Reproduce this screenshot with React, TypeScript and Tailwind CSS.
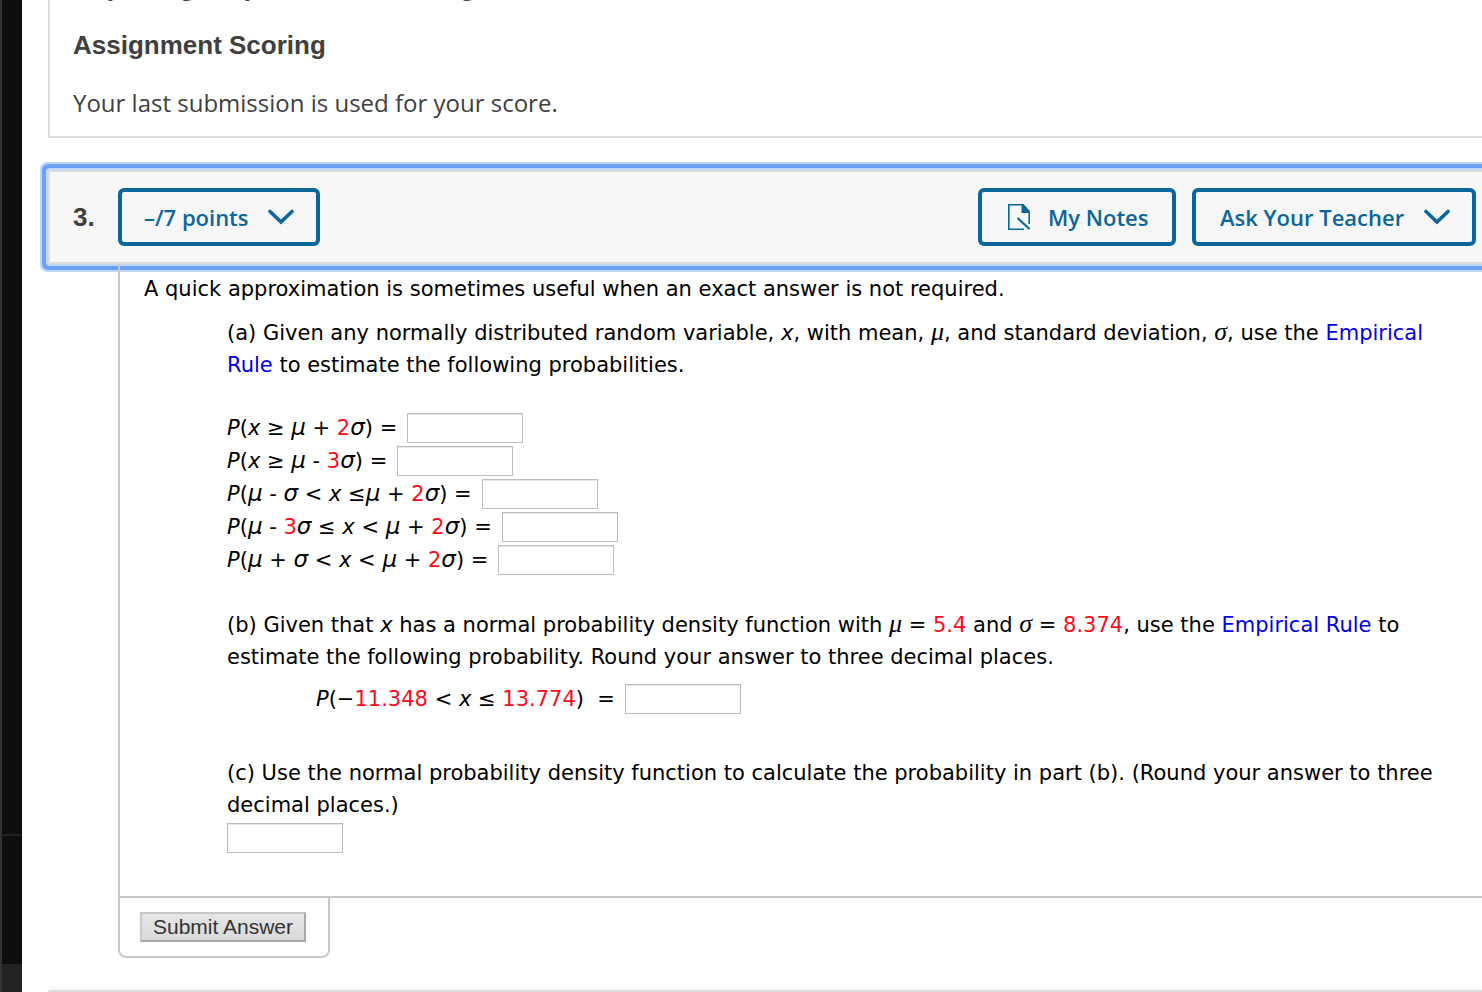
import React from 'react'

const SANS = "font-['DejaVu_Sans',Verdana,sans-serif]"

// ======= Small pieces =======
const Red = ({ children }: { children: React.ReactNode }) => (
  <span className="text-[#ff0a1a]">{children}</span>
)

const X = () => <i>x</i>
const Mu = () => <i className="text-[23px] leading-none">μ</i>
const Sigma = () => <i className="text-[23px] leading-none">σ</i>

// Greek letters inside running text are set in a serif face
const Greek = ({ children }: { children: React.ReactNode }) => (
  <i className="font-['Liberation_Serif',serif] text-[26px] leading-none">{children}</i>
)

const Term = ({ children }: { children: React.ReactNode }) => (
  <a href="#empirical-rule" className="text-[#0000e0]">
    {children}
  </a>
)

const Chevron = () => (
  <svg width="26" height="16" viewBox="0 0 26 16" fill="none" aria-hidden="true">
    <path
      d="M2 2.500L13 13L24 2.500"
      stroke="currentColor"
      strokeWidth="3.600"
      strokeLinecap="round"
    />
  </svg>
)

const NoteIcon = () => (
  <svg width="22" height="26" viewBox="0 0 22 26" fill="none" aria-hidden="true">
    <path d="M16 25.200H0.800V0.800H15L21.200 7.500V20" stroke="currentColor" strokeWidth="1.600" />
    <path d="M13.500 0H15L22 7.500V9H13.500Z" fill="currentColor" />
    <path d="M9.500 14L21.500 25" stroke="currentColor" strokeWidth="2.200" />
  </svg>
)

const toolButton =
  "flex h-[58px] shrink-0 items-center rounded-md border-4 border-[#0b6699] font-['Open_Sans',sans-serif] text-[22px] leading-8 font-semibold text-[#0b6699]"

const answerBox =
  'h-[30px] w-[116px] shrink-0 border border-[#bdbdbd] bg-white px-1 shadow-[inset_0_1px_0_#e8e8e8] outline-none'

// ======= Part (a) =======
const partA = [
  {
    id: 'a1',
    label: (
      <>
        <i>P</i>(<X /> ≥ <Mu /> + <Red>2</Red>
        <Sigma />) =
      </>
    ),
  },
  {
    id: 'a2',
    label: (
      <>
        <i>P</i>(<X /> ≥ <Mu /> - <Red>3</Red>
        <Sigma />) =
      </>
    ),
  },
  {
    id: 'a3',
    label: (
      <>
        <i>P</i>(<Mu /> - <Sigma /> &lt; <X /> ≤<Mu /> + <Red>2</Red>
        <Sigma />) =
      </>
    ),
  },
  {
    id: 'a4',
    label: (
      <>
        <i>P</i>(<Mu /> - <Red>3</Red>
        <Sigma /> ≤ <X /> &lt; <Mu /> + <Red>2</Red>
        <Sigma />) =
      </>
    ),
  },
  {
    id: 'a5',
    label: (
      <>
        <i>P</i>(<Mu /> + <Sigma /> &lt; <X /> &lt; <Mu /> + <Red>2</Red>
        <Sigma />) =
      </>
    ),
  },
]

function Rail() {
  return (
    <div className="flex w-[22px] shrink-0 flex-col border-l-2 border-[#333] bg-[#0e0e0e]">
      <div className="h-[836px] border-b-2 border-[#222]" />
      <div className="h-32" />
      <div className="flex-1 bg-[#222]" />
    </div>
  )
}

function ScoringCard() {
  return (
    <section className="-mt-[30px] border-b-2 border-l-2 border-[#ddd] pb-[17px] pl-[23px] text-[#404040]">
      <p className="font-['Open_Sans',sans-serif] text-[24px] leading-8">
        only changes if you submit or change the answer.
      </p>
      <h2 className="mt-[27px] font-['Liberation_Sans',Arial,sans-serif] text-[26px] leading-8 font-bold">
        Assignment Scoring
      </h2>
      <p className="mt-[26px] font-['Open_Sans',sans-serif] text-[24px] leading-8">
        Your last submission is used for your score.
      </p>
    </section>
  )
}

function QuestionHeader() {
  return (
    <header className="-mr-4 mt-8 flex items-center rounded-xs border-2 border-[#ddd] bg-[#f7f7f7] py-4 pr-5 pl-[23px] shadow-[0_0_0_2px_#bfd6fa,0_0_0_6px_#6aa0f5,0_0_0_8px_#c0d7fb]">
      <h3 className="w-[45px] font-['Liberation_Sans',Arial,sans-serif] text-[26px] leading-8 font-bold text-[#404040]">
        3.
      </h3>
      <button type="button" className={`${toolButton} min-w-[202px] justify-between px-[22px]`}>
        –/7 points
        <Chevron />
      </button>
      <div className="ml-auto flex gap-4">
        <button type="button" className={`${toolButton} min-w-[198px] gap-[18px] pr-[22px] pl-[26px]`}>
          <NoteIcon />
          My Notes
        </button>
        <button type="button" className={`${toolButton} min-w-[284px] justify-between pr-[22px] pl-6`}>
          Ask Your Teacher
          <Chevron />
        </button>
      </div>
    </header>
  )
}

function QuestionBody() {
  return (
    <div
      className={`${SANS} border-b-2 border-l-2 border-[#c8c8c8] pt-[9px] pr-5 pb-[43px] pl-6 text-[21px] leading-8 text-black`}
    >
      <p>A quick approximation is sometimes useful when an exact answer is not required.</p>

      <div className="mt-3 pl-[83px]">
        <p>
          (a) Given any normally distributed random variable, <X />, with mean, <Greek>μ</Greek>, and
          standard deviation, <Greek>σ</Greek>, use the <Term>Empirical Rule</Term> to estimate the
          following probabilities.
        </p>

        <div className="mt-[30px]">
          {partA.map((row) => (
            <div key={row.id} className="flex h-[33px] items-center gap-[10px]">
              <label htmlFor={row.id} className="whitespace-nowrap">
                {row.label}
              </label>
              <input id={row.id} type="text" className={answerBox} />
            </div>
          ))}
        </div>

        <p className="mt-[33px]">
          (b) Given that <X /> has a normal probability density function with <Greek>μ</Greek> ={' '}
          <Red>5.4</Red> and <Greek>σ</Greek> = <Red>8.374</Red>, use the <Term>Empirical Rule</Term>{' '}
          to estimate the following probability. Round your answer to three decimal places.
        </p>

        <div className="mt-[10px] flex items-center gap-[10px] pl-[89px]">
          <label htmlFor="b1" className="whitespace-nowrap">
            <i>P</i>(−<Red>11.348</Red> &lt; <X /> ≤ <Red>13.774</Red>)&nbsp; =
          </label>
          <input id="b1" type="text" className={answerBox} />
        </div>

        <label htmlFor="c1" className="mt-[42px] block">
          (c) Use the normal probability density function to calculate the probability in part (b).
          (Round your answer to three decimal places.)
        </label>
        <input id="c1" type="text" className={`${answerBox} mt-[2px] block`} />
      </div>
    </div>
  )
}

// ======= Page =======
export default function App() {
  return (
    <div className="flex min-h-screen overflow-hidden bg-white">
      <Rail />
      <main className="min-w-0 flex-1 pl-[26px]">
        <ScoringCard />
        <QuestionHeader />
        <div className="pl-[70px]">
          <QuestionBody />
          <div className="w-[212px] rounded-b-lg border-2 border-t-0 border-[#c8c8c8] pt-[14px] pb-[14px] pl-5">
            <button
              type="button"
              className="block h-[30px] w-[166px] border-2 border-t-[#c8c8c8] border-r-[#a8a8a8] border-b-[#a8a8a8] border-l-[#c8c8c8] bg-linear-to-b from-[#e6e6e6] to-[#dadada] font-['Liberation_Sans',Arial,sans-serif] text-[21px] leading-[26px] whitespace-nowrap text-[#333]"
            >
              Submit Answer
            </button>
          </div>
        </div>
        <div className="mt-8 h-[2px] rounded-tl-xs bg-[#ddd] shadow-[0_0_4px_#e8e8e8]" />
      </main>
    </div>
  )
}
